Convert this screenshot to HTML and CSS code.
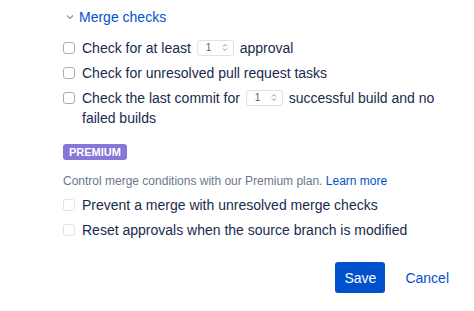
FILE: index.html
```html
<!DOCTYPE html>
<html lang="en">
<head>
  <meta charset="UTF-8">
  <title>Merge checks</title>
  <link rel="stylesheet" href="styles.css">
</head>
<body>

<div class="panel">
  <!-- section toggle -->
  <a class="toggle" href="#">
    <svg class="chevron" width="8" height="6" viewBox="0 0 8 6"><path d="M1 1.5 L4 4.5 L7 1.5" fill="none" stroke="#8993a4" stroke-width="1.2"/></svg>
    Merge checks
  </a>

  <!-- free checks -->
  <div class="checks">
    <label class="check">
      <input type="checkbox">
      <span>Check for at least <span class="num">1<svg class="spin" width="6" height="9" viewBox="0 0 6 9"><path d="M1 3.5 L3 1.5 L5 3.5 M1 5.5 L3 7.5 L5 5.5" fill="none" stroke="#7a869a" stroke-width="0.9"/></svg></span> approval</span>
    </label>
    <label class="check">
      <input type="checkbox">
      <span>Check for unresolved pull request tasks</span>
    </label>
    <label class="check">
      <input type="checkbox">
      <span>Check the last commit for <span class="num">1<svg class="spin" width="6" height="9" viewBox="0 0 6 9"><path d="M1 3.5 L3 1.5 L5 3.5 M1 5.5 L3 7.5 L5 5.5" fill="none" stroke="#7a869a" stroke-width="0.9"/></svg></span> successful build and no failed builds</span>
    </label>
  </div>

  <!-- premium checks -->
  <span class="badge">PREMIUM</span>
  <p class="note">Control merge conditions with our Premium plan. <a href="#">Learn more</a></p>
  <div class="checks">
    <label class="check disabled">
      <input type="checkbox" disabled>
      <span>Prevent a merge with unresolved merge checks</span>
    </label>
    <label class="check disabled">
      <input type="checkbox" disabled>
      <span>Reset approvals when the source branch is modified</span>
    </label>
  </div>

  <div class="actions">
    <button class="save">Save</button>
    <a class="cancel" href="#">Cancel</a>
  </div>
</div>

</body>
</html>
```

FILE: styles.css
```css
body {
  margin: 0;
  background-color: #fff;
  color: #172b4d;
  font-family: "Liberation Sans", Arial, sans-serif;
  font-size: 14px;
}
.panel {
  padding: 7px 24px 0 63px;
}
a {
  color: #0052cc;
  text-decoration: none;
}
.toggle {
  display: flex;
  align-items: center;
  gap: 5px;
  font-size: 14px;
  line-height: 20px;
  padding-left: 3px;
}
.checks {
  margin-top: 11px;
}
.check {
  display: flex;
  align-items: flex-start;
  gap: 7px;
  line-height: 20px;
  margin-bottom: 5px;
}
.check input {
  appearance: none;
  flex: none;
  width: 12px;
  height: 12px;
  margin: 4px 0 0;
  border: 1px solid #a5adba;
  border-radius: 3px;
  background: #fff;
}
.check.disabled input {
  border-color: #dfe1e6;
}
.num {
  display: inline-block;
  position: relative;
  width: 37px;
  height: 16px;
  box-sizing: border-box;
  border: 1px solid #dfe1e6;
  border-radius: 3px;
  padding-left: 8px;
  margin: 2px 2px 0;
  font-size: 10px;
  line-height: 14px;
  color: #505f79;
  vertical-align: top;
}
.spin {
  position: absolute;
  right: 5px;
  top: 2px;
}
.badge {
  display: inline-block;
  margin-top: 11px;
  background: #8777d9;
  color: #fff;
  font-weight: bold;
  font-size: 11px;
  line-height: 16px;
  padding: 0 6px;
  border-radius: 3px;
}
.note {
  margin: 13px 0 0;
  font-size: 12px;
  line-height: 16px;
  color: #6b778c;
}
.note + .checks {
  margin-top: 6px;
}
.actions {
  display: flex;
  justify-content: flex-end;
  align-items: center;
  gap: 20px;
  margin-top: 22px;
  padding-right: 1px;
}
.save {
  background: #0052cc;
  color: #fff;
  border: none;
  border-radius: 3px;
  font-family: inherit;
  font-size: 14px;
  height: 31px;
  padding: 0 9px;
}
.cancel {
  font-size: 14px;
}
```
